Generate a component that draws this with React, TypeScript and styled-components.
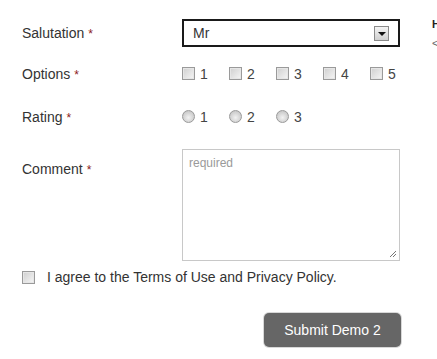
import styled, { createGlobalStyle } from 'styled-components'

const GlobalStyle = createGlobalStyle`
  html, body {
    margin: 0;
    padding: 0;
    background: #fff;
    overflow: hidden;
  }
  body {
    font-family: "Liberation Sans", Arial, sans-serif;
    color: #333;
  }
`

const Page = styled.div`
  display: flex;
  width: 437px;
  height: 359px;
  overflow: hidden;
`

const Form = styled.form`
  flex: 0 0 411px;
  min-width: 0;
  padding: 19px 0 0 22px;
  box-sizing: border-box;
  display: flex;
  flex-direction: column;
`

const Row = styled.div<{ $h: number; $gap: number; $top?: boolean }>`
  display: flex;
  align-items: ${p => (p.$top ? 'flex-start' : 'center')};
  height: ${p => p.$h}px;
  margin-bottom: ${p => p.$gap}px;
`

const Label = styled.label<{ $pad?: number }>`
  width: 160px;
  flex-shrink: 0;
  font-size: 14px;
  line-height: 20px;
  color: #333;
  padding-top: ${p => p.$pad ?? 0}px;
`

const Req = styled.span`
  color: #8b1a1a;
  font-size: 12px;
  margin-left: 4px;
`

const SelectBox = styled.div`
  width: 218px;
  height: 28px;
  box-sizing: border-box;
  border: 2px solid #1a1a1a;
  display: flex;
  align-items: center;
  justify-content: space-between;
  padding: 0 9px 0 9px;
  font-size: 14px;
  color: #333;
`

const ArrowBtn = styled.span`
  width: 15px;
  height: 15px;
  box-sizing: border-box;
  border: 1px solid #8a8a8a;
  background: linear-gradient(#f4f4f4, #cfcfcf);
  display: flex;
  align-items: center;
  justify-content: center;
  &::after {
    content: '';
    border-left: 4px solid transparent;
    border-right: 4px solid transparent;
    border-top: 4px solid #111;
    margin-top: 1px;
  }
`

const Choices = styled.div`
  display: flex;
`

const Choice = styled.span`
  width: 47px;
  display: flex;
  align-items: center;
  font-size: 14px;
  color: #444;
  &:last-child {
    width: auto;
  }
`

const Box = styled.span<{ $round?: boolean }>`
  width: 13px;
  height: 13px;
  box-sizing: border-box;
  border: 1px solid #9a9a9a;
  border-radius: ${p => (p.$round ? '50%' : '0')};
  background: ${p =>
    p.$round
      ? 'radial-gradient(circle at 50% 60%, #f2f2f2 0, #d4d4d4 55%, #bdbdbd 100%)'
      : 'linear-gradient(135deg, #cfcfcf, #f6f6f6)'};
  box-shadow: inset 0 0 0 1px ${p => (p.$round ? 'transparent' : '#e6e6e6')};
  margin-right: 5px;
  flex-shrink: 0;
`

const ChoiceText = styled.span`
  position: relative;
  top: 1px;
`

const TextArea = styled.div`
  width: 218px;
  height: 112px;
  box-sizing: border-box;
  border: 1px solid #c8c8c8;
  padding: 6px 6px;
  font-size: 12px;
  color: #9a9a9a;
  position: relative;
`

const Grip = styled.svg`
  position: absolute;
  right: 2px;
  bottom: 2px;
`

const Agree = styled.div`
  display: flex;
  align-items: center;
  height: 18px;
  font-size: 14px;
  color: #333;
  margin-top: -1px;
  & > span:first-child {
    margin-right: 12px;
  }
`

const Actions = styled.div`
  display: flex;
  justify-content: flex-end;
  padding-top: 27px;
  padding-right: 10px;
`

const Submit = styled.button`
  width: 137px;
  height: 34px;
  border: none;
  border-radius: 5px;
  background: #666;
  color: #fff;
  font-family: "Liberation Sans", Arial, sans-serif;
  font-size: 14px;
  box-shadow: 0 0 0 1px #d8d8d8;
`

const Side = styled.aside`
  flex: 0 0 auto;
  padding: 17px 0 0 21px;
  font-size: 11px;
  white-space: nowrap;
`

const SideTitle = styled.div`
  font-weight: bold;
  color: #222;
  line-height: 14px;
`

const SideCode = styled.div`
  color: #666;
  margin-top: 5px;
  line-height: 14px;
`

export default function App() {
  const options = [1, 2, 3, 4, 5]
  const ratings = [1, 2, 3]
  return (
    <>
      <GlobalStyle />
      <Page>
        <Form onSubmit={e => e.preventDefault()}>
          <Row $h={28} $gap={12}>
            <Label>Salutation<Req>*</Req></Label>
            <SelectBox>
              <span>Mr</span>
              <ArrowBtn />
            </SelectBox>
          </Row>
          <Row $h={28} $gap={15}>
            <Label><ChoiceText>Options<Req>*</Req></ChoiceText></Label>
            <Choices>
              {options.map(n => (
                <Choice key={n}><Box /><ChoiceText>{n}</ChoiceText></Choice>
              ))}
            </Choices>
          </Row>
          <Row $h={28} $gap={19}>
            <Label><ChoiceText>Rating<Req>*</Req></ChoiceText></Label>
            <Choices>
              {ratings.map(n => (
                <Choice key={n}><Box $round /><ChoiceText>{n}</ChoiceText></Choice>
              ))}
            </Choices>
          </Row>
          <Row $h={112} $gap={8} $top>
            <Label $pad={10}>Comment<Req>*</Req></Label>
            <TextArea>
              required
              <Grip width="8" height="8" viewBox="0 0 8 8">
                <path d="M7 1 L1 7 M7 4 L4 7" stroke="#777" strokeWidth="1" />
              </Grip>
            </TextArea>
          </Row>
          <Agree>
            <Box />
            <span>I agree to the Terms of Use and Privacy Policy.</span>
          </Agree>
          <Actions>
            <Submit type="submit">Submit Demo 2</Submit>
          </Actions>
        </Form>
        <Side>
          <SideTitle>How</SideTitle>
          <SideCode>&lt;select&gt;</SideCode>
        </Side>
      </Page>
    </>
  )
}
